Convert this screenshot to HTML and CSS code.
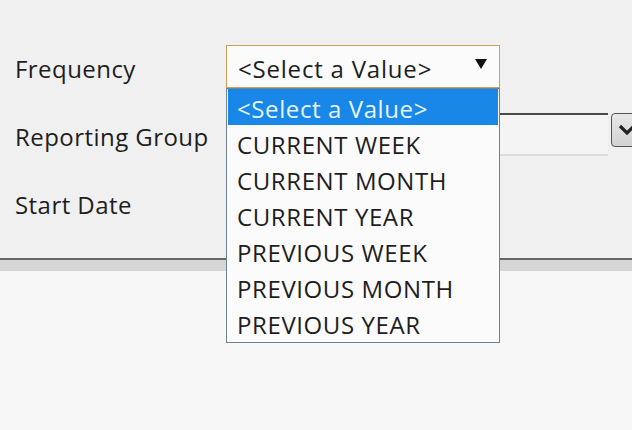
FILE: index.html
```html
<!DOCTYPE html>
<html>
<head>
<meta charset="utf-8">
<link rel="stylesheet" href="styles.css">
</head>
<body>
<div class="panel">
  <div class="form">
    <div class="label">Frequency</div>
    <div class="field">
      <div class="select">
        <span class="value">&lt;Select a Value&gt;</span>
        <svg class="arrow" width="12" height="10" viewBox="0 0 12 10"><polygon points="0,0 12,0 6,10" fill="#111"/></svg>
      </div>
      <ul class="listbox">
        <li class="selected">&lt;Select a Value&gt;</li>
        <li>CURRENT WEEK</li>
        <li>CURRENT MONTH</li>
        <li>CURRENT YEAR</li>
        <li>PREVIOUS WEEK</li>
        <li>PREVIOUS MONTH</li>
        <li>PREVIOUS YEAR</li>
      </ul>
    </div>
    <div class="label">Reporting Group</div>
    <div class="field group">
      <div class="input"></div>
      <div class="btn">
        <svg width="20" height="12" viewBox="0 0 20 12"><path d="M3 2 L10 9 L17 2" fill="none" stroke="#222" stroke-width="3.2"/></svg>
      </div>
    </div>
    <div class="label">Start Date</div>
    <div class="field"></div>
  </div>
</div>
<div class="divider"></div>
<div class="bottom"></div>
</body>
</html>
```
FILE: styles.css
```css
html {
  background: #f7f7f7;
}
body {
  margin: 0;
  padding: 0;
  height: 430px;
  display: flex;
  flex-direction: column;
  background: #f7f7f7;
  font-family: "Open Sans", "Noto Sans", sans-serif;
  color: #1e1e1e;
  overflow: hidden;
}
.panel {
  background: #f0f0f0;
  height: 258px;
  flex: none;
  padding: 45px 0 0 15px;
  box-sizing: border-box;
  position: relative;
  z-index: 1;
}
.form {
  display: grid;
  grid-template-columns: 211px 1fr;
  grid-auto-rows: 43px;
  row-gap: 25px;
}
.form .label {
  font-size: 24px;
  line-height: 43px;
  padding-top: 2px;
  letter-spacing: 0.45px;
}
.field {
  position: relative;
}
.select {
  width: 274px;
  height: 43px;
  box-sizing: border-box;
  border: 1.5px solid #c9a055;
  background: #fbfbfb;
  display: flex;
  align-items: center;
  justify-content: space-between;
  padding: 3px 12px 0 11px;
  font-size: 24px;
  letter-spacing: 0.8px;
}
.select .arrow {
  margin-top: -8px;
}
.listbox {
  position: absolute;
  left: 0;
  top: 43px;
  width: 274px;
  box-sizing: border-box;
  margin: 0;
  padding: 0 1px 1px;
  list-style: none;
  background: #fbfbfb;
  border: 1.5px solid #6d8294;
  z-index: 2;
  font-size: 24px;
  letter-spacing: 0.6px;
}
.listbox li {
  height: 36px;
  box-sizing: border-box;
  padding: 4px 0 0 9px;
  line-height: 32px;
}
.listbox li.selected {
  background: #1887e8;
  color: #e6f6ff;
}
.group {
  display: flex;
  align-items: flex-start;
}
.group .input {
  width: 382px;
  height: 43px;
  box-sizing: border-box;
  border-top: 2px solid #4a4a4a;
  border-bottom: 2px solid #dcdcdc;
  background: #f4f4f4;
}
.group .btn {
  margin-left: 3px;
  width: 30px;
  height: 34px;
  box-sizing: border-box;
  border: 1px solid #555;
  border-radius: 4px;
  background: linear-gradient(#e8e8e8, #d2d2d2);
  display: flex;
  align-items: center;
  padding-left: 5px;
}
.divider {
  height: 2px;
  flex: none;
  background: #666;
}
.bottom {
  height: 11px;
  flex: none;
  background: #d6d6d6;
}
```
